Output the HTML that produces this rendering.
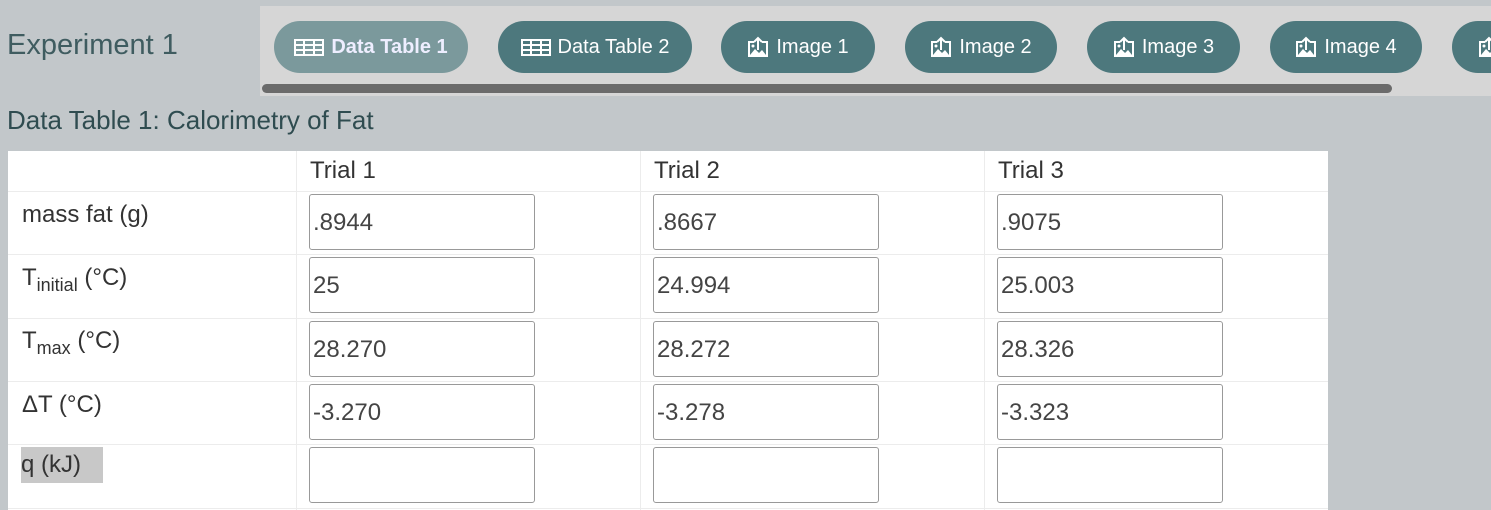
<!DOCTYPE html>
<html><head><style>
body{margin:0;width:1491px;height:510px;background:#c2c7ca;position:relative;overflow:hidden;font-family:"Liberation Sans",sans-serif}
.a{position:absolute}
.strip{left:260px;top:6px;width:1231px;height:90px;background:#d6d6d6}
.pill{position:absolute;top:21px;height:52px;border-radius:26px;background:#4d787d;color:#fff;font-size:20px;display:flex;align-items:center;justify-content:center;gap:7px;white-space:nowrap}
.pill svg{flex:none}
.tbl{left:8px;top:151px;width:1320px;height:359px;background:#fff}
.vl{position:absolute;top:151px;width:1px;height:359px;background:#ececec}
.hl{position:absolute;left:8px;width:1320px;height:1px;background:#ececec}
.lbl{position:absolute;left:22px;font-size:24px;color:#333}
.hd{position:absolute;top:157px;font-size:24px;color:#333}
.in{position:absolute;height:54px;border:1px solid #999;border-radius:3px;background:#fff;font-size:24px;color:#444;line-height:56px;padding-left:3px;width:221px;top:0}
</style></head><body>
<div class="a" style="left:7px;top:29px;font-size:29px;color:#3f5c60">Experiment 1</div>
<div class="a strip"></div>
<div class="a" style="left:262px;top:84px;width:1130px;height:9px;border-radius:5px;background:#6b6b6b"></div>
<svg width="0" height="0" style="position:absolute"><defs>
<symbol id="tb" viewBox="0 0 30 17"><rect x="1" y="1" width="28" height="15" fill="none" stroke="#fff" stroke-width="2"/><path d="M1 6H29M1 11H29M10 1V16M20 1V16" stroke="#fff" stroke-width="2"/></symbol>
<symbol id="im" viewBox="0 0 22 22"><path d="M7 6H2V20H20V6H15" fill="none" stroke="#fff" stroke-width="2"/><path d="M11 14V2M7 6L11 2L15 6" fill="none" stroke="#fff" stroke-width="2"/><path d="M3 19L8 13L12 17L15 14L19 19Z" fill="#fff"/><circle cx="6" cy="10" r="1.5" fill="#fff"/></symbol>
</defs></svg>
<div class="pill" style="left:274px;width:194px;background:#7b999c;color:#eef;font-weight:bold"><svg width="30" height="17"><use href="#tb"/></svg>Data Table 1</div>
<div class="pill" style="left:498px;width:194px"><svg width="30" height="17"><use href="#tb"/></svg>Data Table 2</div>
<div class="pill" style="left:721px;width:154px"><svg width="22" height="22"><use href="#im"/></svg>Image 1</div>
<div class="pill" style="left:905px;width:152px"><svg width="22" height="22"><use href="#im"/></svg>Image 2</div>
<div class="pill" style="left:1087px;width:153px"><svg width="22" height="22"><use href="#im"/></svg>Image 3</div>
<div class="pill" style="left:1270px;width:152px"><svg width="22" height="22"><use href="#im"/></svg>Image 4</div>
<div class="pill" style="left:1452px;width:39px;border-radius:26px 0 0 26px;justify-content:flex-start;padding-left:26px;box-sizing:border-box;overflow:hidden"><svg width="22" height="22"><use href="#im"/></svg></div>
<div class="a" style="left:7px;top:105px;font-size:26px;color:#2f4c50">Data Table 1: Calorimetry of Fat</div>
<div class="a tbl"></div>
<div class="vl" style="left:296px"></div><div class="vl" style="left:640px"></div><div class="vl" style="left:984px"></div>
<div class="hl" style="top:191px"></div><div class="hl" style="top:254px"></div><div class="hl" style="top:318px"></div><div class="hl" style="top:381px"></div><div class="hl" style="top:444px"></div><div class="hl" style="top:508px"></div>
<div class="hd" style="left:310px">Trial 1</div><div class="hd" style="left:654px">Trial 2</div><div class="hd" style="left:998px">Trial 3</div>
<div class="lbl" style="top:201px">mass fat (g)</div>
<div class="lbl" style="top:264px">T<sub style="font-size:18px;vertical-align:-6px">initial</sub> (°C)</div>
<div class="lbl" style="top:327px">T<sub style="font-size:18px;vertical-align:-6px">max</sub> (°C)</div>
<div class="lbl" style="top:391px">ΔT (°C)</div>
<div class="lbl" style="top:447px;left:21px;background:#c8c8c8;padding:6px 22px 7px 0;line-height:23px">q (kJ)</div>
<div class="a" style="left:309px;top:194px"><div class="in" style="top:0">.8944</div><div class="in" style="top:63px">25</div><div class="in" style="top:127px">28.270</div><div class="in" style="top:190px">-3.270</div><div class="in" style="top:253px"></div></div>
<div class="a" style="left:653px;top:194px"><div class="in" style="top:0">.8667</div><div class="in" style="top:63px">24.994</div><div class="in" style="top:127px">28.272</div><div class="in" style="top:190px">-3.278</div><div class="in" style="top:253px"></div></div>
<div class="a" style="left:997px;top:194px"><div class="in" style="top:0">.9075</div><div class="in" style="top:63px">25.003</div><div class="in" style="top:127px">28.326</div><div class="in" style="top:190px">-3.323</div><div class="in" style="top:253px"></div></div>
</body></html>
